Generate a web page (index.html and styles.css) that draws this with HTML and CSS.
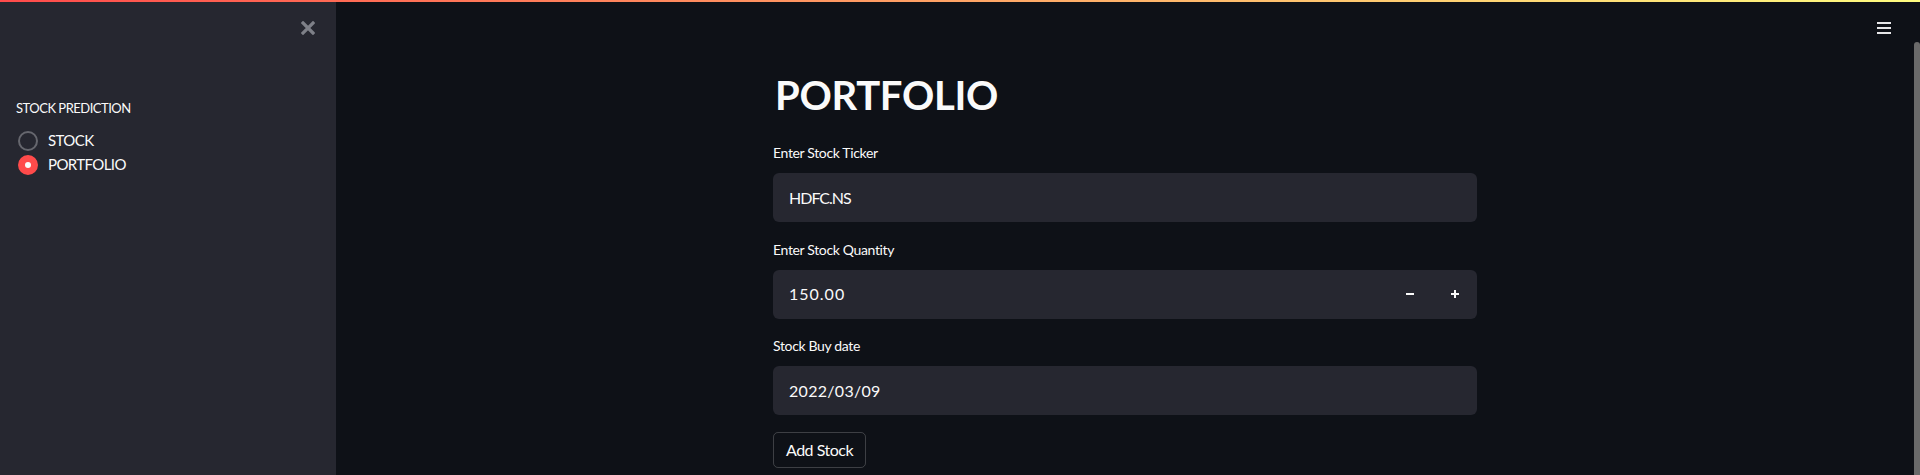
FILE: index.html
```html
<!DOCTYPE html>
<html lang="en">
<head>
<meta charset="utf-8">
<title>Portfolio</title>
<link rel="stylesheet" href="styles.css">
</head>
<body>
<div class="decoration"></div>
<div class="app">
  <aside class="sidebar">
    <div class="sidebar-head">
      <svg class="close-icon" width="14" height="14" viewBox="0 0 14 14"><path d="M2 2L12 12M12 2L2 12" stroke="#7e8088" stroke-width="3.2" stroke-linecap="square"/></svg>
    </div>
    <div class="side-label">STOCK PREDICTION</div>
    <div class="radio-group">
      <div class="radio-row"><span class="radio"></span><span class="radio-text">STOCK</span></div>
      <div class="radio-row"><span class="radio radio-on"><span class="radio-dot"></span></span><span class="radio-text">PORTFOLIO</span></div>
    </div>
  </aside>
  <main class="main">
    <div class="toolbar">
      <svg class="menu-icon" width="14" height="14" viewBox="0 0 14 14"><rect x="0" y="0" width="14" height="2" fill="#e6e6e8"/><rect x="0" y="5" width="14" height="2" fill="#e6e6e8"/><rect x="0" y="10" width="14" height="2" fill="#e6e6e8"/></svg>
    </div>
    <div class="content">
      <h1 class="title">PORTFOLIO</h1>
      <div class="field">
        <div class="field-label">Enter Stock Ticker</div>
        <div class="input"><span class="input-text input-text-alpha">HDFC.NS</span></div>
      </div>
      <div class="field">
        <div class="field-label">Enter Stock Quantity</div>
        <div class="input input-number">
          <span class="input-text input-text-num">150.00</span>
          <div class="steppers">
            <span class="step"><svg width="8" height="8" viewBox="0 0 8 8"><rect x="0" y="3" width="8" height="2" fill="#fafafa"/></svg></span>
            <span class="step"><svg width="8" height="8" viewBox="0 0 8 8"><rect x="0" y="3" width="8" height="2" fill="#fafafa"/><rect x="3" y="0" width="2" height="8" fill="#fafafa"/></svg></span>
          </div>
        </div>
      </div>
      <div class="field">
        <div class="field-label">Stock Buy date</div>
        <div class="input"><span class="input-text input-text-date">2022/03/09</span></div>
      </div>
      <button class="btn">Add Stock</button>
    </div>
  </main>
  <div class="scrollbar"></div>
</div>
</body>
</html>
```
FILE: styles.css
```css
* { box-sizing: border-box; }
html, body { margin: 0; padding: 0; }
body {
  width: 1920px;
  height: 475px;
  overflow: hidden;
  background: #0e1117;
  color: #fafafa;
  font-family: Lato, "Noto Sans", sans-serif;
}
.decoration {
  height: 2px;
  background: linear-gradient(90deg, #ff4b4b, #fffd80);
}
.app {
  display: flex;
  height: 473px;
}
.sidebar {
  width: 336px;
  flex: none;
  background: #262730;
  padding: 0 16px;
}
.sidebar-head {
  display: flex;
  justify-content: flex-end;
  padding: 19px 5px 0 0;
  height: 33px;
}
.close-icon { display: block; }
.side-label {
  margin-top: 63px;
  font-size: 13px;
  letter-spacing: -0.5px;
  line-height: 20px;
  margin-bottom: 11px;
}
.radio-group { display: flex; flex-direction: column; }
.radio-row {
  display: flex;
  align-items: center;
  height: 24px;
  padding-left: 2px;
}
.radio {
  width: 20px;
  height: 20px;
  border-radius: 50%;
  border: 2px solid #66676e;
  display: flex;
  align-items: center;
  justify-content: center;
  flex: none;
}
.radio-on {
  background: #ff4b4b;
  border-color: #ff4b4b;
}
.radio-dot {
  width: 6px;
  height: 6px;
  border-radius: 50%;
  background: #fafafa;
}
.radio-text {
  margin-left: 10px;
  font-size: 15px;
  letter-spacing: -0.6px;
  line-height: 24px;
  margin-top: -3px;
}
.main {
  flex: 1;
  display: flex;
  flex-direction: column;
}
.toolbar {
  display: flex;
  justify-content: flex-end;
  padding: 20px 23px 0 0;
  height: 34px;
}
.menu-icon { display: block; }
.content {
  width: 704px;
  margin: 0 auto;
  padding-top: 35px;
}
.title {
  margin: 0 0 24px 2px;
  font-size: 40px;
  letter-spacing: -0.3px;
  line-height: 48px;
  font-weight: 700;
}
.field { margin-bottom: 17.5px; }
.field-label {
  font-size: 14px;
  letter-spacing: -0.35px;
  line-height: 20px;
  margin-bottom: 10px;
}
.input {
  height: 49px;
  background: #262730;
  border-radius: 6px;
  display: flex;
  align-items: center;
  padding-left: 16px;
}
.input-text {
  font-size: 16px;
  line-height: 20px;
  flex: 1;
}
.input-text-alpha { letter-spacing: -1px; }
.input-text-num { letter-spacing: 1px; }
.input-text-date { letter-spacing: 0.3px; }
.steppers {
  display: flex;
  height: 100%;
}
.step {
  width: 45px;
  height: 100%;
  display: flex;
  align-items: center;
  justify-content: center;
}
.step svg { display: block; }
.btn {
  margin-top: -1px;
  height: 36px;
  padding: 0 12px;
  background: transparent;
  border: 1px solid rgba(250, 250, 250, 0.2);
  border-radius: 5px;
  color: #fafafa;
  font-family: Lato, "Noto Sans", sans-serif;
  font-size: 16px;
  letter-spacing: -0.5px;
}
.scrollbar {
  width: 6px;
  flex: none;
  margin-top: 40px;
  background: #6a6a6a;
  border-radius: 3px 3px 0 0;
}
```
